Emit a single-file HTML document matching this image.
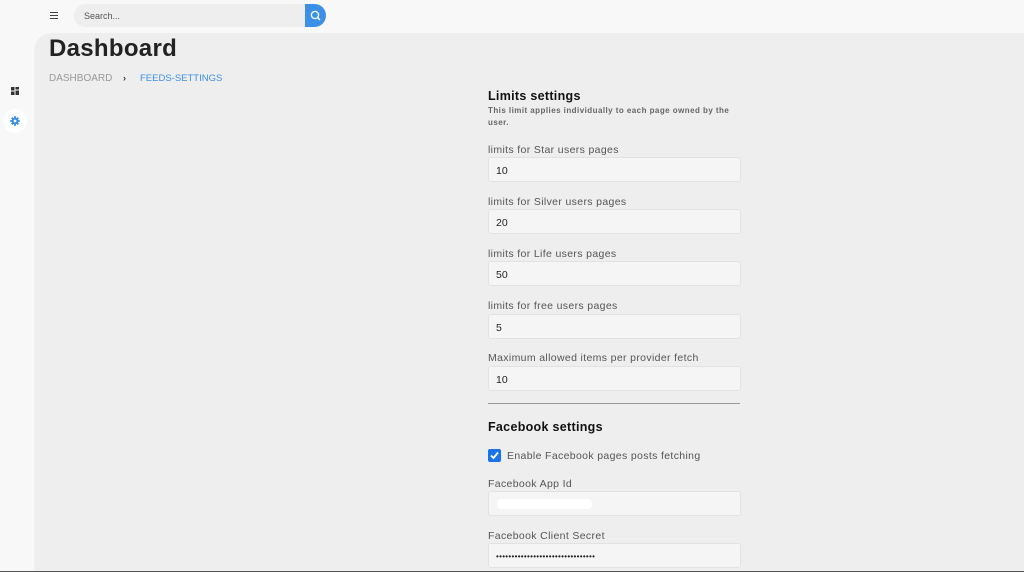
<!DOCTYPE html>
<html><head><style>
*{box-sizing:border-box;margin:0;padding:0}
body{width:1024px;height:572px;overflow:hidden;background:#f8f8f8;font-family:"Liberation Sans",sans-serif;position:relative}
.main{position:absolute;left:34px;top:33px;right:0;bottom:0;background:#eeeeee;border-top-left-radius:18px}
.search{position:absolute;left:74px;top:4px;width:252px;height:23px;background:#eeeeee;border-radius:12px;font-size:9px;color:#555;padding:7px 0 0 10px}
.sbtn{position:absolute;left:305px;top:4px;width:21px;height:23px;background:#3b8fe6;border-radius:0 12px 12px 0}
.ham{position:absolute;left:50px;top:12px;width:8px}
.ham i{display:block;height:1.3px;background:#444;margin-bottom:1.7px}
h1{position:absolute;left:49px;top:35px;font-size:24px;font-weight:bold;color:#222;letter-spacing:0.3px}
.bc{position:absolute;top:73px;font-size:10px}
.lab{position:absolute;left:488px;font-size:10.5px;color:#555;letter-spacing:0.35px}
.inp{position:absolute;left:488px;width:253px;height:25px;background:#f5f5f5;border:1px solid #e2e2e2;border-radius:3px;font-size:10.5px;color:#222;padding:7px 0 0 7px}
h2{position:absolute;left:488px;font-size:12.5px;font-weight:bold;color:#111;letter-spacing:0.3px}
</style></head><body>
<div class="main"></div>
<div class="ham"><i></i><i></i><i></i></div>
<div class="search">Search...</div>
<div class="sbtn"><svg width="21" height="23" viewBox="0 0 21 23"><circle cx="10" cy="11" r="3.6" fill="none" stroke="#fff" stroke-width="1.3"/><path d="M12.6 13.6 15 16" stroke="#fff" stroke-width="1.4"/></svg></div>
<svg style="position:absolute;left:11px;top:87px" width="8" height="8"><rect x="0" y="0" width="3.5" height="3.5" fill="#333"/><rect x="4.5" y="0" width="3.5" height="2.5" fill="#333"/><rect x="0" y="4.5" width="3.5" height="3.5" fill="#333"/><rect x="4.5" y="3.5" width="3.5" height="4.5" fill="#333"/></svg>
<div style="position:absolute;left:3px;top:109px;width:24px;height:24px;border-radius:12px;background:#fff"></div>
<svg style="position:absolute;left:10px;top:116px" width="10" height="10" viewBox="0 0 10 10"><g fill="#3b8fe6"><circle cx="5" cy="5" r="3.3"/><rect x="4" y="0.3" width="2" height="9.4"/><rect x="0.3" y="4" width="9.4" height="2"/><rect x="4" y="0.3" width="2" height="9.4" transform="rotate(45 5 5)"/><rect x="4" y="0.3" width="2" height="9.4" transform="rotate(-45 5 5)"/></g><circle cx="5" cy="5" r="1.4" fill="#fff"/></svg>
<h1>Dashboard</h1>
<div class="bc" style="left:49px;color:#999">DASHBOARD</div>
<div class="bc" style="left:123px;color:#333;font-weight:bold;font-size:9px">›</div>
<div class="bc" style="left:140px;color:#3b8fe6;font-size:9.5px">FEEDS-SETTINGS</div>
<h2 style="top:89px">Limits settings</h2>
<div style="position:absolute;left:488px;top:105px;width:250px;font-size:8px;font-weight:bold;color:#666;line-height:12px;letter-spacing:0.45px">This limit applies individually to each page owned by the user.</div>
<div class="lab" style="top:144px">limits for Star users pages</div><div class="inp" style="top:157px">10</div>
<div class="lab" style="top:196px">limits for Silver users pages</div><div class="inp" style="top:209px">20</div>
<div class="lab" style="top:248px">limits for Life users pages</div><div class="inp" style="top:261px">50</div>
<div class="lab" style="top:300px">limits for free users pages</div><div class="inp" style="top:314px">5</div>
<div class="lab" style="top:352px">Maximum allowed items per provider fetch</div><div class="inp" style="top:366px">10</div>
<div style="position:absolute;left:488px;top:403px;width:252px;height:1px;background:#999"></div>
<h2 style="top:420px">Facebook settings</h2>
<div style="position:absolute;left:488px;top:449px;width:13px;height:13px;background:#1a73e8;border-radius:2px"><svg width="13" height="13"><path d="M3 6.5 5.5 9 10 3.5" stroke="#fff" stroke-width="1.8" fill="none"/></svg></div>
<div class="lab" style="left:507px;top:450px">Enable Facebook pages posts fetching</div>
<div class="lab" style="top:478px">Facebook App Id</div><div class="inp" style="top:491px"><div style="position:absolute;left:8px;top:7px;width:95px;height:10px;background:#fff;border-radius:5px"></div></div>
<div class="lab" style="top:530px">Facebook Client Secret</div><div class="inp" style="top:543px;font-size:8px;padding-top:8px;letter-spacing:0.3px">••••••••••••••••••••••••••••••••</div>
<div style="position:absolute;left:0;top:571px;width:1024px;height:1px;background:#555"></div>
</body></html>
